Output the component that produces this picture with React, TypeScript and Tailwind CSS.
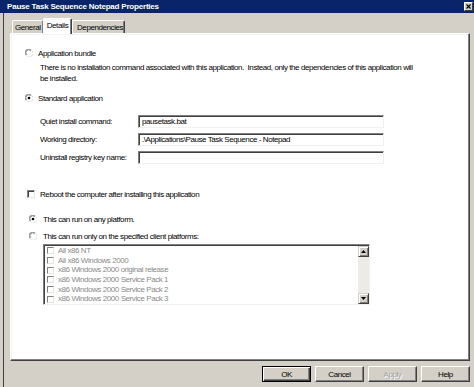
import React from "react";

// ────────────────────────────────────────────
// Small classic-Windows controls
// ────────────────────────────────────────────

function Radio({ checked = false }: { checked?: boolean }) {
  return (
    <svg width="8" height="8" viewBox="0 0 12 12" className="shrink-0">
      <circle cx="6" cy="6" r="5.5" fill="#fff" />
      <path d="M1.5 9.5 A5.5 5.5 0 0 1 9.5 1.5" stroke="#808080" strokeWidth="1.2" fill="none" />
      <path d="M2.5 8.5 A4.2 4.2 0 0 1 8.5 2.5" stroke="#404040" strokeWidth="1" fill="none" />
      <path d="M10.5 2.5 A5.5 5.5 0 0 1 2.5 10.5" stroke="#d4d0c8" strokeWidth="1" fill="none" />
      {checked && <circle cx="6" cy="6" r="2" fill="#000" />}
    </svg>
  );
}

function Check({ disabled = false }: { disabled?: boolean }) {
  return (
    <div
      className={`shrink-0 border border-t-[#808080] border-l-[#808080] border-r-[#e8e6e0] border-b-[#e8e6e0] ${
        disabled ? "w-[7px] h-[7px] bg-white" : "w-[8px] h-[8px] bg-white shadow-[inset_1px_1px_0_#404040]"
      }`}
    />
  );
}

function Field({ label, value }: { label: string; value?: string }) {
  return (
    <div className="flex items-center h-[13px]">
      <span className="w-[98px] ml-[29px] whitespace-nowrap">{label}</span>
      <div className="w-[246px] h-[13px] flex items-center pl-[3px] bg-white border border-t-[#808080] border-l-[#808080] border-r-[#f0f0f0] border-b-[#f0f0f0] shadow-[inset_1px_1px_0_#404040]">
        <span className="whitespace-nowrap">{value}</span>
      </div>
    </div>
  );
}

function Button({ label, isDefault = false, disabled = false }: { label: string; isDefault?: boolean; disabled?: boolean }) {
  return (
    <button
      className={`w-[49px] h-[16px] flex items-center justify-center bg-[#d4d0c8] ${
        isDefault
          ? "border border-black shadow-[inset_1px_1px_0_#fff,inset_-1px_-1px_0_#404040,inset_-2px_-2px_0_#808080]"
          : "border border-t-white border-l-white border-r-[#404040] border-b-[#404040] shadow-[inset_-1px_-1px_0_#808080]"
      } ${disabled ? "text-[#a0a0a0] [text-shadow:1px_1px_0_#fff]" : "text-black"}`}
    >
      {label}
    </button>
  );
}

const platforms = [
  "All x86 NT",
  "All x86 Windows 2000",
  "x86 Windows 2000 original release",
  "x86 Windows 2000 Service Pack 1",
  "x86 Windows 2000 Service Pack 2",
  "x86 Windows 2000 Service Pack 3",
];

// ────────────────────────────────────────────
// Dialog
// ────────────────────────────────────────────

export default function App() {
  return (
    <div className="w-[474px] h-[387px] bg-[#d4d0c8] flex flex-col overflow-hidden text-[8px] leading-[11px] tracking-[-0.42px] text-black font-['Liberation_Sans',Arial,sans-serif]">
      {/* Title bar */}
      <div className="h-[13px] shrink-0 bg-[#0a246a] flex items-center pl-[7px] pr-[1px]">
        <span className="font-bold text-white whitespace-nowrap tracking-[-0.2px]">Pause Task Sequence Notepad Properties</span>
        <div className="ml-auto w-[9px] h-[9px] bg-[#d4d0c8] border border-t-white border-l-white border-r-[#404040] border-b-[#404040] flex items-center justify-center">
          <svg width="5" height="5" viewBox="0 0 5 5">
            <path d="M0.5 0.5 L4.5 4.5 M4.5 0.5 L0.5 4.5" stroke="#000" strokeWidth="1.2" />
          </svg>
        </div>
      </div>

      <div className="flex-1 flex flex-col ml-[3px] border-l border-[#404040] pl-[6px]">
        {/* Tabs */}
        <div className="h-[20px] shrink-0 flex items-end pl-[2px]">
          <div className="w-[31px] h-[13px] flex items-center pl-[2px] whitespace-nowrap border-t border-l border-white border-r border-r-[#808080] rounded-t-[2px]">
            General
          </div>
          <div className="relative z-10 -mb-[1px] w-[29px] h-[16px] bg-white flex items-center justify-center pb-[2px] whitespace-nowrap border-t border-l border-white border-r border-r-[#404040] rounded-t-[2px] shadow-[inset_-1px_0_0_#808080,inset_1px_1px_0_#f4f4f4]">
            Details
          </div>
          <div className="w-[53px] h-[13px] flex items-center pl-[4px] whitespace-nowrap border-t border-l border-white border-r border-r-[#404040] rounded-t-[2px] shadow-[inset_-1px_0_0_#808080]">
            Dependencies
          </div>
        </div>

        {/* Panel */}
        <div className="w-[460px] h-[328px] shrink-0 bg-white flex flex-col border border-t-white border-l-white border-r-[#404040] border-b-[#404040] shadow-[inset_-1px_-1px_0_#808080,inset_1px_1px_0_#f4f4f4]">
          <div className="flex items-center h-[12px] mt-[13px] ml-[14px] gap-[5px]">
            <Radio />
            <span>Application bundle</span>
          </div>
          <p className="mt-[3px] ml-[29px] whitespace-nowrap">
            There is no installation command associated with this application.&nbsp; Instead, only the dependencies of this application will
            <br />
            be installed.
          </p>
          <div className="flex items-center h-[12px] mt-[8px] ml-[14px] gap-[5px]">
            <Radio checked />
            <span>Standard application</span>
          </div>

          <div className="flex flex-col gap-[5px] mt-[11px]">
            <Field label="Quiet install command:" value="pausetask.bat" />
            <Field label="Working directory:" value=".\Applications\Pause Task Sequence - Notepad" />
            <Field label="Uninstall registry key name:" />
          </div>

          <div className="flex items-center h-[12px] mt-[24px] ml-[16px] gap-[5px]">
            <Check />
            <span>Reboot the computer after installing this application</span>
          </div>

          <div className="flex items-center h-[12px] mt-[13px] ml-[18px] gap-[6px]">
            <Radio checked />
            <span>This can run on any platform.</span>
          </div>
          <div className="flex items-center h-[12px] mt-[5px] ml-[18px] gap-[6px]">
            <Radio />
            <span>This can run only on the specified client platforms:</span>
          </div>

          {/* Platform list */}
          <div className="mt-[2px] ml-[32px] w-[327px] h-[61px] flex bg-white border border-t-[#808080] border-l-[#808080] border-r-[#f0f0f0] border-b-[#f0f0f0] shadow-[inset_1px_1px_0_#404040]">
            <div className="flex-1 flex flex-col pt-[1px] pl-[3px] overflow-hidden">
              {platforms.map((p) => (
                <div key={p} className="h-[9.75px] flex items-center gap-[4px] text-[#8a8a8a] leading-none whitespace-nowrap">
                  <Check disabled />
                  <span>{p}</span>
                </div>
              ))}
            </div>
            {/* Scrollbar */}
            <div className="w-[11px] flex flex-col bg-[#ecebe6] mt-[1px]">
              <div className="h-[11px] bg-[#d4d0c8] flex items-center justify-center border border-t-[#d4d0c8] border-l-[#d4d0c8] border-r-[#404040] border-b-[#404040] shadow-[inset_1px_1px_0_#fff,inset_-1px_-1px_0_#808080]">
                <svg width="5" height="3" viewBox="0 0 5 3"><path d="M2.5 0 L5 3 L0 3 Z" fill="#000" /></svg>
              </div>
              <div className="flex-1" />
              <div className="h-[11px] bg-[#d4d0c8] flex items-center justify-center border border-t-[#d4d0c8] border-l-[#d4d0c8] border-r-[#404040] border-b-[#404040] shadow-[inset_1px_1px_0_#fff,inset_-1px_-1px_0_#808080]">
                <svg width="5" height="3" viewBox="0 0 5 3"><path d="M0 0 L5 0 L2.5 3 Z" fill="#000" /></svg>
              </div>
            </div>
          </div>
        </div>

        {/* Buttons */}
        <div className="flex justify-end gap-[4px] pt-[5px] pr-[4px]">
          <Button label="OK" isDefault />
          <Button label="Cancel" />
          <Button label="Apply" disabled />
          <Button label="Help" />
        </div>
      </div>
    </div>
  );
}
